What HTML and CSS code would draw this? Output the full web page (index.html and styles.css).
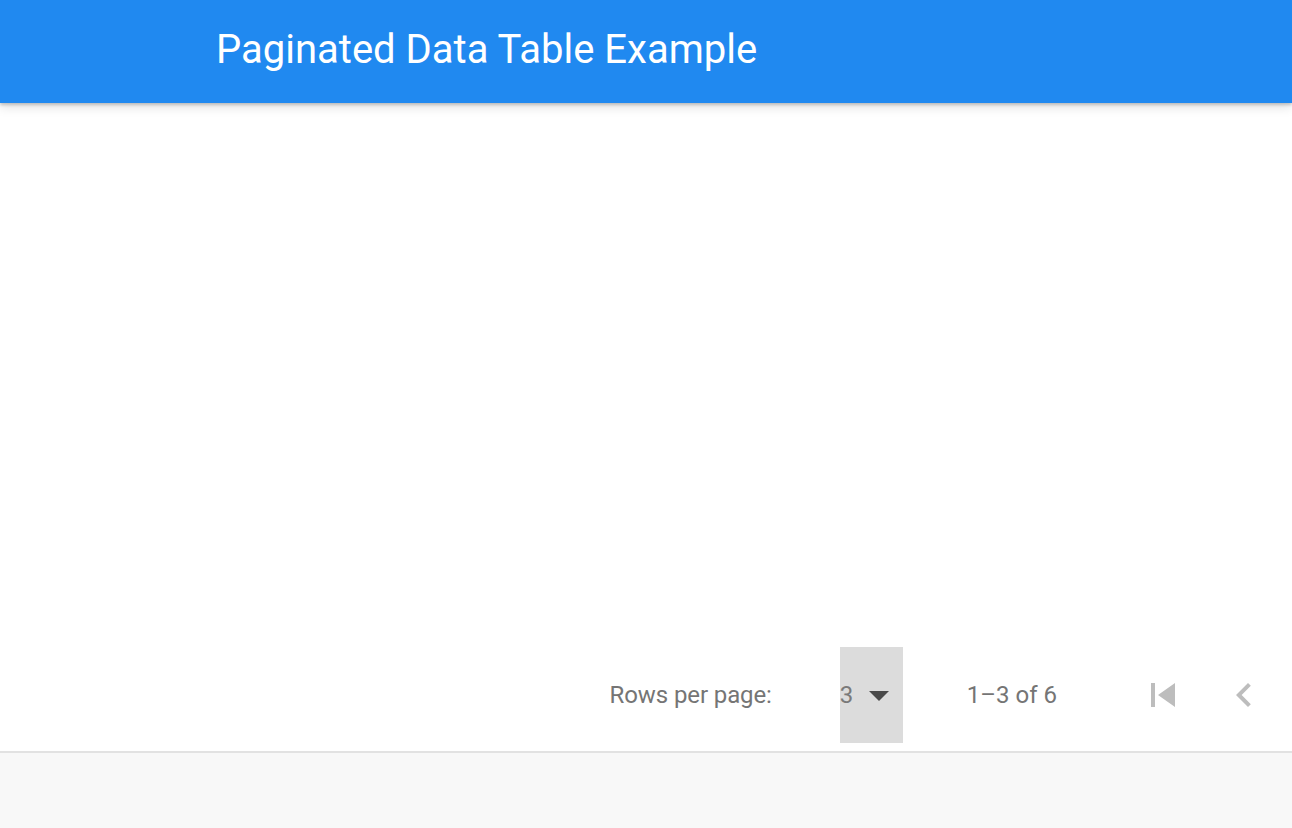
FILE: index.html
```html
<!DOCTYPE html>
<html>
<head>
<meta charset="utf-8">
<link rel="stylesheet" href="styles.css">
</head>
<body>
<div class="app">
  <header class="appbar">
    <h1 class="title">Paginated Data Table Example</h1>
  </header>
  <main class="content">
    <div class="spacer"></div>
    <div class="pagination">
      <span class="label">Rows per page:</span>
      <div class="select">
        <span class="select-value">3</span>
        <svg class="icon" viewBox="0 0 24 24"><path d="M7,10L12,15L17,10H7Z" fill="#4a4a4a"/></svg>
      </div>
      <span class="range">1–3 of 6</span>
      <svg class="icon first" viewBox="0 0 24 24"><path d="M6,18V6H8V18H6M9.5,12L18,6V18L9.5,12Z" fill="#bdbdbd"/></svg>
      <svg class="icon prev" viewBox="0 0 24 24"><path d="M15.41,16.58L10.83,12L15.41,7.41L14,6L8,12L14,18L15.41,16.58Z" fill="#bdbdbd"/></svg>
    </div>
  </main>
  <div class="bottom"></div>
</div>
</body>
</html>
```
FILE: styles.css
```css
html, body {
  margin: 0;
  padding: 0;
  background: #ffffff;
}
.app {
  display: flex;
  flex-direction: column;
  height: 828px;
  font-family: Roboto, "Liberation Sans", sans-serif;
}
.appbar {
  height: 103px;
  background: #2089f0;
  display: flex;
  align-items: center;
  padding-left: 216px;
  box-shadow: 0 2px 3px rgba(0,0,0,0.2), 0 5px 10px rgba(0,0,0,0.1);
  position: relative;
  z-index: 1;
  flex: none;
}
.title {
  margin: 0;
  color: #ffffff;
  font-size: 40px;
  font-weight: 400;
  line-height: 1;
  letter-spacing: 0;
  transform: translateY(-2px);
}
.content {
  flex: 1;
  display: flex;
  flex-direction: column;
  background: #ffffff;
}
.spacer {
  flex: 1;
}
.pagination {
  height: 96px;
  margin-bottom: 8px;
  display: flex;
  align-items: center;
  justify-content: flex-end;
  padding-right: 24px;
  color: #757575;
  font-size: 24px;
}
.label {
  margin-right: 68px;
  letter-spacing: -0.1px;
}
.select {
  width: 63px;
  height: 96px;
  background: #dcdcdc;
  display: flex;
  align-items: center;
}
.select-value {
  width: 15px;
  color: #7a7a7a;
}
.icon {
  width: 48px;
  height: 48px;
  display: block;
  flex: none;
}
.range {
  margin-left: 64px;
  margin-right: 82px;
}
.prev {
  margin-left: 33px;
}
.bottom {
  height: 75px;
  border-top: 2px solid #e2e2e2;
  background: #f8f8f8;
  flex: none;
}
```
